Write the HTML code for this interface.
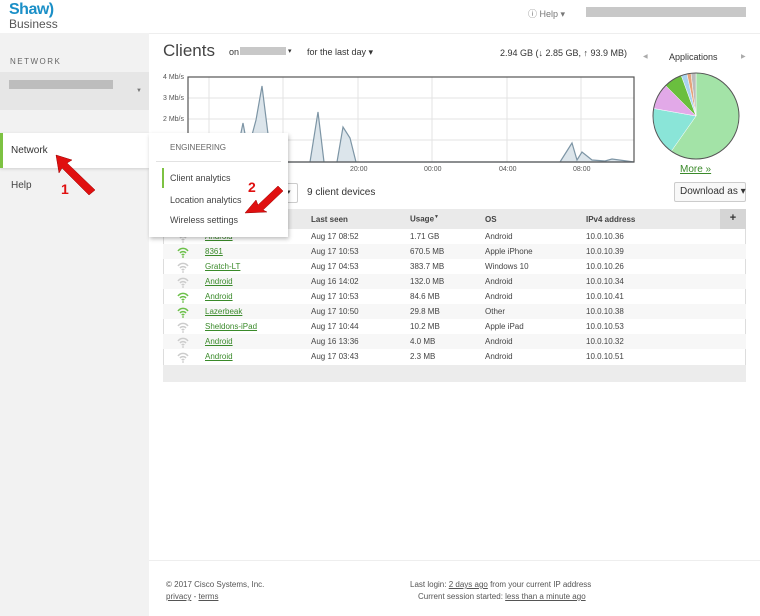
<!DOCTYPE html>
<html><head><meta charset="utf-8"><style>
*{margin:0;padding:0;box-sizing:border-box}
body{width:760px;height:616px;position:relative;overflow:hidden;background:#fff;font-family:"Liberation Sans",Arial,sans-serif;color:#333}
.a{position:absolute;white-space:nowrap}
.side{position:absolute;left:0;top:0;width:149px;height:616px;background:#f2f2f2}
.lnk{color:#3a8a2a;text-decoration:underline}
.row{position:absolute;left:163px;width:583px;height:15px;font-size:8px;color:#444}
.row span{position:absolute;top:3px}
.row svg{position:absolute;left:14px;top:3px}
</style></head><body>
<svg width="0" height="0" style="position:absolute"><defs>
<g id="wf"><path d="M1 4 A6 6 0 0 1 11 4" fill="none" stroke-width="1.5"/><path d="M3 6 A4 4 0 0 1 9 6" fill="none" stroke-width="1.5"/><path d="M4.7 8 A2 2 0 0 1 7.3 8" fill="none" stroke-width="1.5"/><line x1="6" y1="9" x2="6" y2="11" stroke-width="1.2"/></g>
</defs></svg>
<div class="side"></div>
<div class="a" style="left:0;top:0;width:149px;height:33px;background:#fff"></div>
<div class="a" style="left:9px;top:1px;font-size:16px;font-weight:bold;color:#1a8fc7;letter-spacing:-0.5px">Shaw)</div>
<div class="a" style="left:9px;top:17px;font-size:12px;color:#555">Business</div>
<div class="a" style="left:10px;top:57px;font-size:8px;letter-spacing:1.5px;color:#666">NETWORK</div>
<div class="a" style="left:0;top:72px;width:149px;height:38px;background:#e6e6e6"></div>
<div class="a" style="left:9px;top:80px;width:104px;height:9px;background:#bdbdbd"></div>
<div class="a" style="left:136px;top:88px;font-size:6px;color:#777">▼</div>
<div class="a" style="left:0;top:133px;width:149px;height:35px;background:#fff;border-left:3px solid #7dc242;box-shadow:0 1px 3px rgba(0,0,0,.15)"></div>
<div class="a" style="left:11px;top:145px;font-size:10px;color:#333">Network</div>
<div class="a" style="left:11px;top:180px;font-size:10px;color:#444">Help</div>
<div class="a" style="left:149px;top:33px;width:611px;height:1px;background:#eee"></div>
<div class="a" style="left:528px;top:7px;font-size:9px;color:#777">ⓘ Help ▾</div>
<div class="a" style="left:586px;top:7px;width:160px;height:10px;background:#c8c8c8"></div>
<div class="a" style="left:163px;top:41px;font-size:17px;color:#444">Clients</div>
<div class="a" style="left:229px;top:47px;font-size:9px;color:#333">on</div>
<div class="a" style="left:240px;top:47px;width:46px;height:8px;background:#c8c8c8"></div>
<div class="a" style="left:288px;top:47px;font-size:7px">▾</div>
<div class="a" style="left:307px;top:47px;font-size:9px;color:#333">for the last day ▾</div>
<div class="a" style="left:500px;top:48px;font-size:9px;color:#333">2.94 GB (↓ 2.85 GB, ↑ 93.9 MB)</div>
<div class="a" style="left:643px;top:53px;font-size:6px;color:#aaa">◀</div>
<div class="a" style="left:669px;top:52px;font-size:9px;color:#333">Applications</div>
<div class="a" style="left:741px;top:53px;font-size:6px;color:#aaa">▶</div>
<svg class="a" style="left:160px;top:70px" width="480" height="106">
<g font-size="7" fill="#555" font-family="Liberation Sans">
<text x="3" y="9">4 Mb/s</text><text x="3" y="30">3 Mb/s</text><text x="3" y="51">2 Mb/s</text>
<text x="190" y="101">20:00</text><text x="264" y="101">00:00</text><text x="339" y="101">04:00</text><text x="413" y="101">08:00</text></g>
<g stroke="#e3e3e3" stroke-width="1">
<line x1="28" y1="28" x2="474" y2="28"/><line x1="28" y1="49" x2="474" y2="49"/><line x1="28" y1="70" x2="474" y2="70"/>
<line x1="49" y1="7" x2="49" y2="92"/><line x1="123" y1="7" x2="123" y2="92"/><line x1="198" y1="7" x2="198" y2="92"/><line x1="272" y1="7" x2="272" y2="92"/><line x1="347" y1="7" x2="347" y2="92"/><line x1="421" y1="7" x2="421" y2="92"/></g>
<path d="M28 92 L75 92 L83 53 L88 80 L96 50 L102 16 L110 80 L118 92 L150 92 L158 42 L164 92 L177 92 L183 57 L190 68 L196 92 L400 92 L412 73 L417 90 L422 82 L432 90 L445 91 L452 89 L474 92 Z" fill="#dce5eb" stroke="#7d95a5" stroke-width="1.2"/>
<rect x="28" y="7" width="446" height="85" fill="none" stroke="#555" stroke-width="1.2"/>
</svg>
<svg class="a" style="left:650px;top:70px" width="92" height="92">
<g transform="translate(46,46)" stroke="#fff" stroke-width="0.5">
<path d="M0 0 L0 -43 A43 43 0 1 1 -24.7 35.2 Z" fill="#a3e3a7"/>
<path d="M0 0 L-24.7 35.2 A43 43 0 0 1 -42.3 -7.5 Z" fill="#8ae5d8"/>
<path d="M0 0 L-42.3 -7.5 A43 43 0 0 1 -30.4 -30.4 Z" fill="#e2a9e8"/>
<path d="M0 0 L-30.4 -30.4 A43 43 0 0 1 -14.7 -40.4 Z" fill="#6abf3e"/>
<path d="M0 0 L-14.7 -40.4 A43 43 0 0 1 -9 -42 Z" fill="#a9d3ef"/>
<path d="M0 0 L-9 -42 A43 43 0 0 1 -5 -42.7 Z" fill="#e5a37a"/>
<path d="M0 0 L-5 -42.7 A43 43 0 0 1 0 -43 Z" fill="#bbb"/>
</g><circle cx="46" cy="46" r="43" fill="none" stroke="#555" stroke-width="1"/></svg>
<div class="a lnk" style="left:680px;top:164px;font-size:10px">More »</div>
<div class="a" style="left:240px;top:183px;width:58px;height:20px;border:1px solid #ccc;border-radius:2px;background:#fff"></div>
<div class="a" style="left:287px;top:188px;font-size:7px">▾</div>
<div class="a" style="left:307px;top:187px;font-size:10px;color:#333">9 client devices</div>
<div class="a" style="left:674px;top:182px;width:72px;height:20px;border:1px solid #ccc;border-radius:2px;background:#f8f8f8;font-size:10px;padding:3px 0 0 5px">Download as ▾</div>
<div class="a" style="left:163px;top:209px;width:583px;height:173px;border:1px solid #ddd"></div>
<div class="a" style="left:163px;top:209px;width:583px;height:20px;background:#eaeaea"></div>
<div class="a" style="left:720px;top:209px;width:26px;height:20px;background:#d5d5d5;font-size:11px;font-weight:bold;text-align:center;line-height:19px">+</div>
<div class="a" style="left:311px;top:215px;font-size:8px;font-weight:bold;color:#444">Last seen</div>
<div class="a" style="left:410px;top:214px;font-size:8px;font-weight:bold;color:#444">Usage<sup style="font-size:5px">▼</sup></div>
<div class="a" style="left:485px;top:215px;font-size:8px;font-weight:bold;color:#444">OS</div>
<div class="a" style="left:586px;top:215px;font-size:8px;font-weight:bold;color:#444">IPv4 address</div>
<div class="a" style="left:163px;top:365px;width:583px;height:17px;background:#ececec"></div>

<div class="row" style="top:229px"><svg width="12" height="11" stroke="#ccc"><use href="#wf"/></svg><span style="left:42px" class="lnk">Android</span><span style="left:148px">Aug 17 08:52</span><span style="left:247px">1.71 GB</span><span style="left:322px">Android</span><span style="left:423px">10.0.10.36</span></div>
<div class="row" style="top:244px;background:#f7f7f7"><svg width="12" height="11" stroke="#6cc04a"><use href="#wf"/></svg><span style="left:42px" class="lnk">8361</span><span style="left:148px">Aug 17 10:53</span><span style="left:247px">670.5 MB</span><span style="left:322px">Apple iPhone</span><span style="left:423px">10.0.10.39</span></div>
<div class="row" style="top:259px"><svg width="12" height="11" stroke="#ccc"><use href="#wf"/></svg><span style="left:42px" class="lnk">Gratch-LT</span><span style="left:148px">Aug 17 04:53</span><span style="left:247px">383.7 MB</span><span style="left:322px">Windows 10</span><span style="left:423px">10.0.10.26</span></div>
<div class="row" style="top:274px;background:#f7f7f7"><svg width="12" height="11" stroke="#ccc"><use href="#wf"/></svg><span style="left:42px" class="lnk">Android</span><span style="left:148px">Aug 16 14:02</span><span style="left:247px">132.0 MB</span><span style="left:322px">Android</span><span style="left:423px">10.0.10.34</span></div>
<div class="row" style="top:289px"><svg width="12" height="11" stroke="#6cc04a"><use href="#wf"/></svg><span style="left:42px" class="lnk">Android</span><span style="left:148px">Aug 17 10:53</span><span style="left:247px">84.6 MB</span><span style="left:322px">Android</span><span style="left:423px">10.0.10.41</span></div>
<div class="row" style="top:304px;background:#f7f7f7"><svg width="12" height="11" stroke="#6cc04a"><use href="#wf"/></svg><span style="left:42px" class="lnk">Lazerbeak</span><span style="left:148px">Aug 17 10:50</span><span style="left:247px">29.8 MB</span><span style="left:322px">Other</span><span style="left:423px">10.0.10.38</span></div>
<div class="row" style="top:319px"><svg width="12" height="11" stroke="#ccc"><use href="#wf"/></svg><span style="left:42px" class="lnk">Sheldons-iPad</span><span style="left:148px">Aug 17 10:44</span><span style="left:247px">10.2 MB</span><span style="left:322px">Apple iPad</span><span style="left:423px">10.0.10.53</span></div>
<div class="row" style="top:334px;background:#f7f7f7"><svg width="12" height="11" stroke="#ccc"><use href="#wf"/></svg><span style="left:42px" class="lnk">Android</span><span style="left:148px">Aug 16 13:36</span><span style="left:247px">4.0 MB</span><span style="left:322px">Android</span><span style="left:423px">10.0.10.32</span></div>
<div class="row" style="top:349px"><svg width="12" height="11" stroke="#ccc"><use href="#wf"/></svg><span style="left:42px" class="lnk">Android</span><span style="left:148px">Aug 17 03:43</span><span style="left:247px">2.3 MB</span><span style="left:322px">Android</span><span style="left:423px">10.0.10.51</span></div>

<div class="a" style="left:149px;top:133px;width:139px;height:104px;background:#fff;box-shadow:1px 2px 4px rgba(0,0,0,.25)"></div>
<div class="a" style="left:170px;top:143px;font-size:8px;color:#666">ENGINEERING</div>
<div class="a" style="left:156px;top:161px;width:125px;height:1px;background:#e2e2e2"></div>
<div class="a" style="left:162px;top:168px;width:2px;height:20px;background:#7dc242"></div>
<div class="a" style="left:170px;top:173px;font-size:9px;color:#444">Client analytics</div>
<div class="a" style="left:170px;top:195px;font-size:9px;color:#444">Location analytics</div>
<div class="a" style="left:170px;top:215px;font-size:9px;color:#444">Wireless settings</div>
<div class="a" style="left:149px;top:560px;width:611px;height:1px;background:#eee"></div>
<div class="a" style="left:166px;top:580px;font-size:8px;color:#555">© 2017 Cisco Systems, Inc.</div>
<div class="a" style="left:166px;top:592px;font-size:8px;color:#555"><u>privacy</u> - <u>terms</u></div>
<div class="a" style="left:410px;top:580px;font-size:8px;color:#555">Last login: <u>2 days ago</u> from your current IP address</div>
<div class="a" style="left:418px;top:592px;font-size:8px;color:#555">Current session started: <u>less than a minute ago</u></div>
<svg class="a" style="left:0;top:0" width="760" height="616">
<g fill="#e01010" stroke="#900" stroke-width="0.5">
<path d="M56 155 L72 160 L67 163 L95 190 L89 195 L62 168 L59 173 Z"/>
<path d="M245 213 L256 200 L258 205 L278 186 L283 191 L263 210 L267 212 Z"/>
</g>
<g font-family="Liberation Sans" font-weight="bold" font-size="14" fill="#e01010">
<text x="61" y="194">1</text><text x="248" y="192">2</text></g></svg>
</body></html>
